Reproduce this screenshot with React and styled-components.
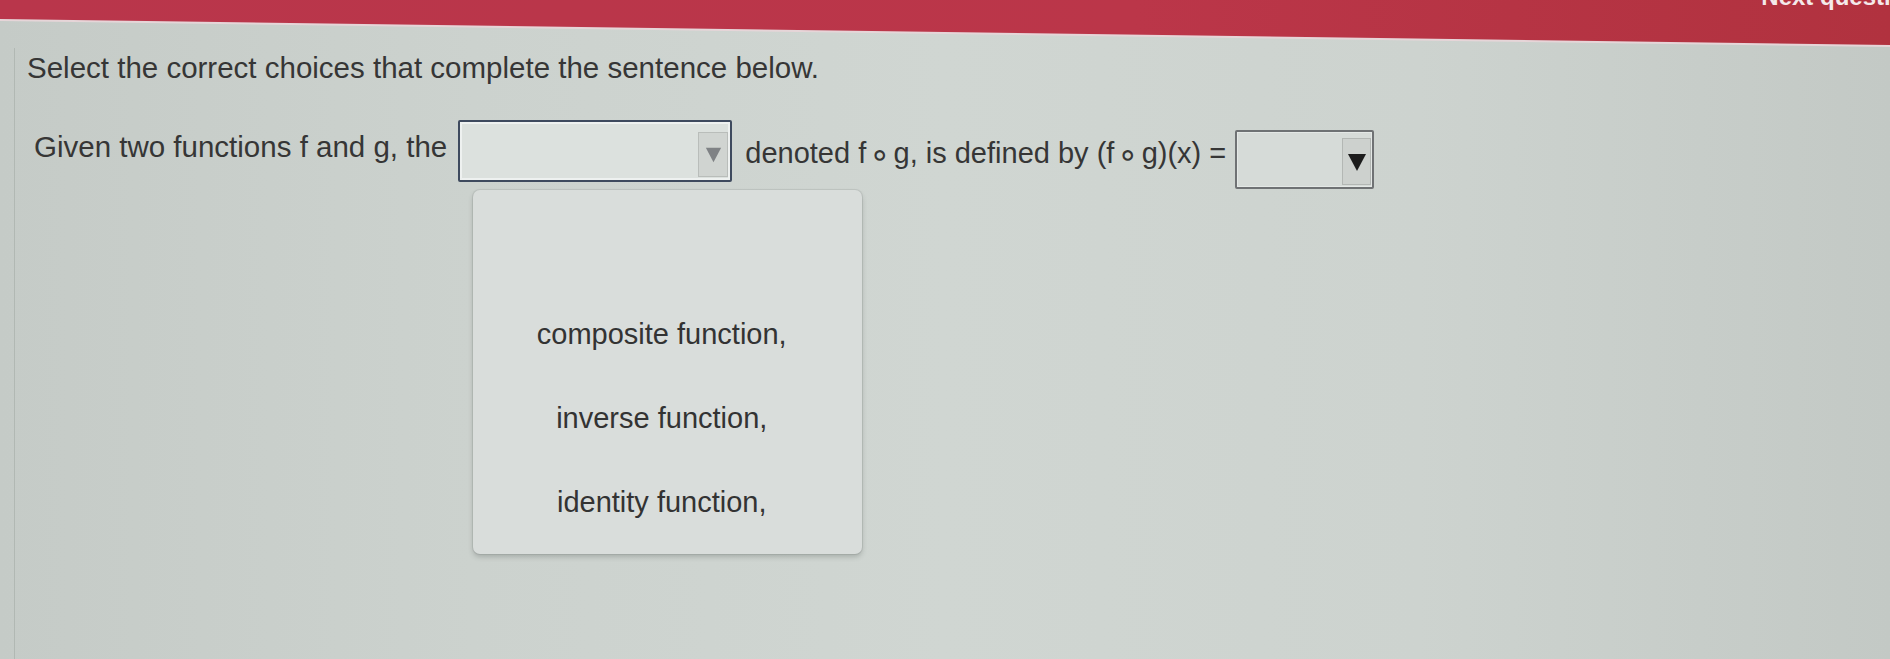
import React from "react";
import styled, { createGlobalStyle } from "styled-components";

const GlobalStyle = createGlobalStyle`
  html, body {
    margin: 0;
    padding: 0;
  }
  body {
    background: #cacfcc;
    font-family: "Liberation Sans", Arial, sans-serif;
  }
  #root {
    width: 1890px;
    height: 659px;
    overflow: hidden;
  }
`;

const choices = ["", "composite function,", "inverse function,", "identity function,"];

const Arrow = ({ color, size }) => (
  <svg width={size} height={size} viewBox="0 0 20 20">
    <polygon points="1,2 19,2 10,19" fill={color} />
  </svg>
);

const App = () => {
  return (
    <Page>
      <GlobalStyle />
      <Header>
        <RedBand>
          <HeaderLink>Next question</HeaderLink>
        </RedBand>
      </Header>

      <Content>
        <Title>Select the correct choices that complete the sentence below.</Title>

        <Sentence>
          <Words top={10}>Given two functions f and g, the</Words>

          <SelectWrap gap={11}>
            <Select>
              <ArrowButton>
                <Arrow color="#7f8285" size={17} />
              </ArrowButton>
            </Select>
            <Menu>
              {choices.map((c, i) => (
                <Option key={i}>{c}</Option>
              ))}
            </Menu>
          </SelectWrap>

          <Words top={16} gap={13} size={29}>
            denoted f<Ring>∘</Ring>g, is defined by (f<Ring>∘</Ring>g)(x) =
          </Words>

          <SelectWrap gap={9} top={10}>
            <SmallSelect>
              <SmallArrowButton>
                <Arrow color="#1c1c1c" size={20} />
              </SmallArrowButton>
            </SmallSelect>
          </SelectWrap>
        </Sentence>
      </Content>
    </Page>
  );
};

const Page = styled.div`
  width: 1890px;
  height: 659px;
  display: flex;
  flex-direction: column;
  background: linear-gradient(
    90deg,
    #c5cbc7 0%,
    #ccd2ce 25%,
    #d0d6d2 50%,
    #cdd3cf 75%,
    #c3c9c5 100%
  );
`;

const Header = styled.div`
  height: 48px;
  flex-shrink: 0;
  background: #e6d5d8;
  clip-path: polygon(0 0, 100% 0, 100% 47px, 0 21px);
`;

const RedBand = styled.div`
  height: 100%;
  display: flex;
  justify-content: flex-end;
  align-items: flex-start;
  background: linear-gradient(90deg, #b9364b 0%, #bb3649 60%, #b1323f 100%);
  clip-path: polygon(0 0, 100% 0, 100% 45px, 0 19px);
`;

const HeaderLink = styled.span`
  margin-top: -15px;
  margin-right: -30px;
  font-size: 24px;
  line-height: 24px;
  font-weight: 700;
  color: #f4e9ea;
  white-space: nowrap;
`;

const Content = styled.div`
  flex: 1;
  margin-left: 14px;
  padding: 3px 0 0 12px;
  border-left: 1px solid rgba(140, 148, 144, 0.35);
`;

const Title = styled.p`
  margin: 0;
  font-size: 29.5px;
  line-height: 34px;
  color: #363636;
  white-space: nowrap;
`;

const Sentence = styled.div`
  display: flex;
  align-items: flex-start;
  margin-top: 35px;
  padding-left: 7px;
`;

const Words = styled.span`
  margin-top: ${(p) => p.top || 0}px;
  margin-left: ${(p) => p.gap || 0}px;
  font-size: ${(p) => p.size || 29.5}px;
  line-height: 34px;
  color: #363636;
  white-space: nowrap;
`;

const Ring = styled.span`
  display: inline-block;
  padding: 0 3px;
  font-family: "DejaVu Sans", sans-serif;
  font-size: 34px;
  line-height: 34px;
  vertical-align: -3px;
`;

const SelectWrap = styled.div`
  position: relative;
  margin-left: ${(p) => p.gap || 0}px;
  margin-top: ${(p) => p.top || 0}px;
`;

const Select = styled.div`
  box-sizing: border-box;
  width: 274px;
  height: 62px;
  display: flex;
  justify-content: flex-end;
  align-items: flex-start;
  padding: 10px 2px 0 0;
  background: #dce1de;
  border: 2px solid #3e4a5e;
  border-radius: 2px;
  box-shadow: inset 0 0 0 2px #eef1f0;
`;

const ArrowButton = styled.div`
  box-sizing: border-box;
  width: 30px;
  height: 45px;
  display: flex;
  align-items: center;
  justify-content: center;
  background: #d0d4d1;
  border: 1px solid #b9bdba;
`;

const SmallSelect = styled(Select)`
  width: 139px;
  height: 59px;
  padding: 6px 1px 0 0;
  background: #d6dbd8;
  border: 2px solid #6f7274;
  box-shadow: inset 0 0 0 1px #e4e8e6;
`;

const SmallArrowButton = styled(ArrowButton)`
  width: 29px;
  height: 47px;
  background: #cdd1ce;
  border-color: #b3b7b4;
`;

const Menu = styled.div`
  position: absolute;
  left: 15px;
  top: 70px;
  width: 389px;
  box-sizing: border-box;
  padding: 18px 0 10px;
  background: #d9dddb;
  border-radius: 7px;
  box-shadow: 0 3px 5px rgba(60, 66, 62, 0.25), 0 0 0 1px rgba(170, 176, 172, 0.4);
  z-index: 2;
`;

const Option = styled.div`
  height: 84px;
  line-height: 84px;
  padding-right: 12px;
  text-align: center;
  font-size: 29px;
  color: #333;
  white-space: nowrap;
`;

export default App;
